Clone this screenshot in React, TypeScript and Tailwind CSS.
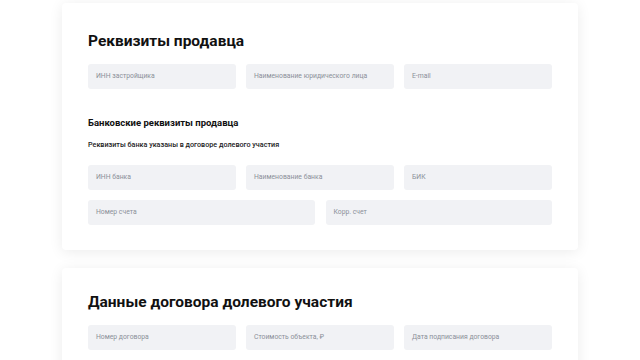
import React from "react";

function Field({ label }: { label: string }) {
  return (
    <div className="h-[25px] rounded-[3px] bg-[#f1f2f5] flex items-center pl-[8px] text-[6.8px] text-[#8b9099]">
      {label}
    </div>
  );
}

export default function App() {
  return (
    <div
      className="w-[640px] h-[360px] overflow-hidden bg-white pt-[3px]"
      style={{ fontFamily: "Roboto, 'Noto Sans', sans-serif" }}
    >
      <div className="mx-auto w-[516px] flex flex-col gap-[18px]">
        <div className="bg-white rounded-[4px] shadow-[0_2px_14px_rgba(0,0,0,0.08)] px-[26px] pt-[26px] pb-[25px]">
          <h1 className="text-[15.5px] leading-[24px] font-bold text-[#111]">
            Реквизиты продавца
          </h1>
          <div className="mt-[11px] grid grid-cols-3 gap-[10px]">
            <Field label="ИНН застройщика" />
            <Field label="Наименование юридического лица" />
            <Field label="E-mail" />
          </div>
          <h2 className="mt-[27px] text-[9.5px] leading-[14px] font-bold text-[#111]">
            Банковские реквизиты продавца
          </h2>
          <p className="mt-[10px] text-[7.2px] leading-[10px] font-medium text-[#222]">
            Реквизиты банка указаны в договоре долевого участия
          </p>
          <div className="mt-[15px] grid grid-cols-3 gap-[10px]">
            <Field label="ИНН банка" />
            <Field label="Наименование банка" />
            <Field label="БИК" />
          </div>
          <div className="mt-[10px] grid grid-cols-2 gap-[11px]">
            <Field label="Номер счета" />
            <Field label="Корр. счет" />
          </div>
        </div>
        <div className="bg-white rounded-[4px] shadow-[0_2px_14px_rgba(0,0,0,0.08)] px-[26px] pt-[22px] pb-[25px]">
          <h1 className="text-[15.5px] leading-[24px] font-bold text-[#111]">
            Данные договора долевого участия
          </h1>
          <div className="mt-[11px] grid grid-cols-3 gap-[10px]">
            <Field label="Номер договора" />
            <Field label="Стоимость объекта, ₽" />
            <Field label="Дата подписания договора" />
          </div>
        </div>
      </div>
    </div>
  );
}
